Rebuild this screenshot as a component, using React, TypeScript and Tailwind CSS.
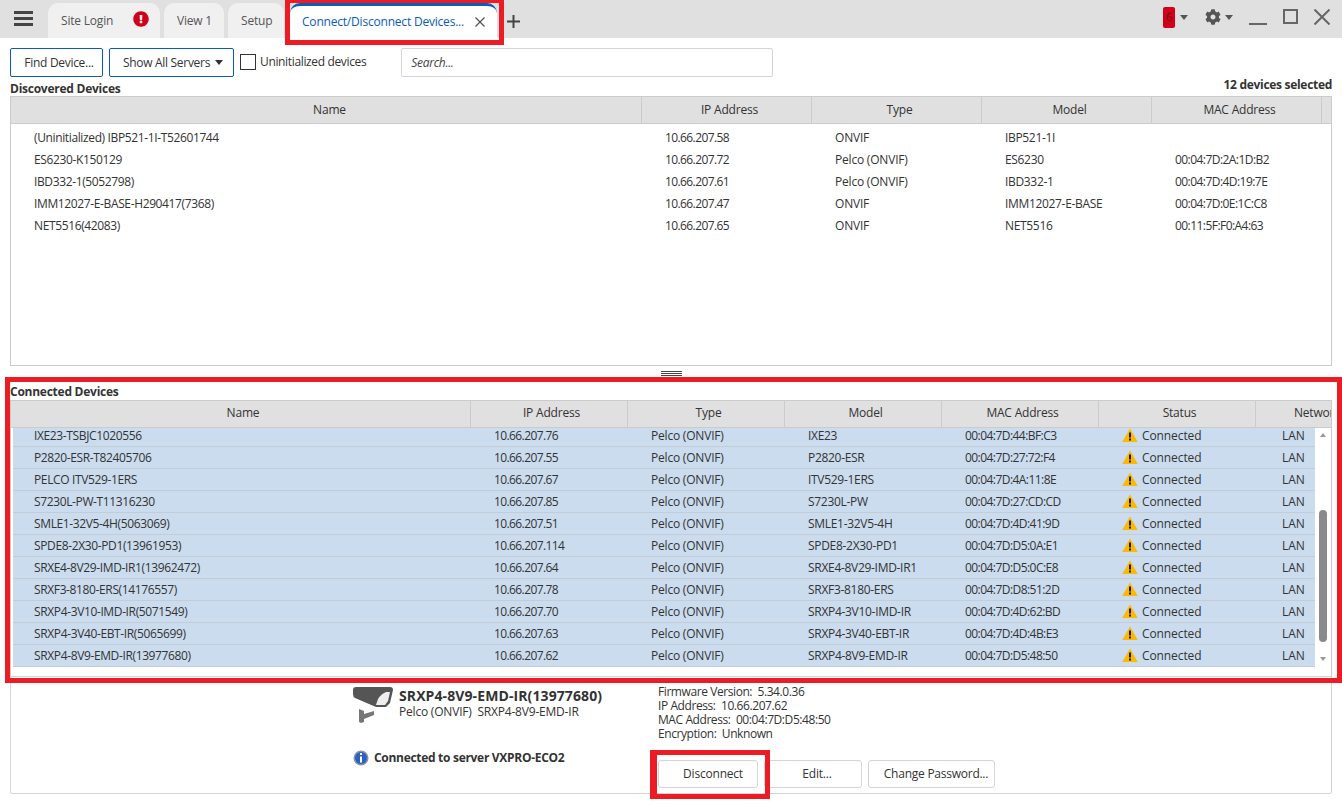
import React from "react";
import { FaCog, FaExclamationCircle } from "react-icons/fa";

const discovered = [
  ["(Uninitialized) IBP521-1I-T52601744", "10.66.207.58", "ONVIF", "IBP521-1I", ""],
  ["ES6230-K150129", "10.66.207.72", "Pelco (ONVIF)", "ES6230", "00:04:7D:2A:1D:B2"],
  ["IBD332-1(5052798)", "10.66.207.61", "Pelco (ONVIF)", "IBD332-1", "00:04:7D:4D:19:7E"],
  ["IMM12027-E-BASE-H290417(7368)", "10.66.207.47", "ONVIF", "IMM12027-E-BASE", "00:04:7D:0E:1C:C8"],
  ["NET5516(42083)", "10.66.207.65", "ONVIF", "NET5516", "00:11:5F:F0:A4:63"],
];

const connected = [
  ["IXE23-TSBJC1020556", "10.66.207.76", "IXE23", "00:04:7D:44:BF:C3"],
  ["P2820-ESR-T82405706", "10.66.207.55", "P2820-ESR", "00:04:7D:27:72:F4"],
  ["PELCO ITV529-1ERS", "10.66.207.67", "ITV529-1ERS", "00:04:7D:4A:11:8E"],
  ["S7230L-PW-T11316230", "10.66.207.85", "S7230L-PW", "00:04:7D:27:CD:CD"],
  ["SMLE1-32V5-4H(5063069)", "10.66.207.51", "SMLE1-32V5-4H", "00:04:7D:4D:41:9D"],
  ["SPDE8-2X30-PD1(13961953)", "10.66.207.114", "SPDE8-2X30-PD1", "00:04:7D:D5:0A:E1"],
  ["SRXE4-8V29-IMD-IR1(13962472)", "10.66.207.64", "SRXE4-8V29-IMD-IR1", "00:04:7D:D5:0C:E8"],
  ["SRXF3-8180-ERS(14176557)", "10.66.207.78", "SRXF3-8180-ERS", "00:04:7D:D8:51:2D"],
  ["SRXP4-3V10-IMD-IR(5071549)", "10.66.207.70", "SRXP4-3V10-IMD-IR", "00:04:7D:4D:62:BD"],
  ["SRXP4-3V40-EBT-IR(5065699)", "10.66.207.63", "SRXP4-3V40-EBT-IR", "00:04:7D:4D:4B:E3"],
  ["SRXP4-8V9-EMD-IR(13977680)", "10.66.207.62", "SRXP4-8V9-EMD-IR", "00:04:7D:D5:48:50"],
];

const WarnIcon = () => (
  <svg width="16" height="14" viewBox="0 0 16 14" className="shrink-0 -mt-[1px]">
    <path d="M8 0.5 L15.8 14 H0.2 Z" fill="#fdb900" />
    <rect x="7" y="4.5" width="2" height="5" fill="#1a1a1a" />
    <rect x="7" y="10.5" width="2" height="2" fill="#1a1a1a" />
  </svg>
);

const CameraIcon = () => (
  <svg width="40" height="36" viewBox="0 0 40 36" className="shrink-0">
    <path d="M0 3 Q0 0 3 0 H37 Q40 0 40 3 L37 16 L33 20 L23 20 L2 11 Q0 10 0 7 Z" fill="#555" />
    <path d="M23 18 Q25 8 33 5 L37 5 L35 14 L32 18 Z" fill="#eee" />
    <path d="M6 22 L11 24 L11 27 L21 24 L21 28 L11 32 L11 35 L8 36 L6 35 Z" fill="#777" />
  </svg>
);

const InfoIcon = () => (
  <svg width="16" height="16" viewBox="0 0 16 16" className="shrink-0">
    <circle cx="8" cy="8" r="7.5" fill="#8a94a6" />
    <circle cx="8" cy="8" r="6" fill="#2a62c4" />
    <rect x="7" y="3" width="2" height="2" fill="#fff" />
    <rect x="7" y="6.5" width="2" height="6" fill="#fff" />
  </svg>
);

const Header = ({ label, w, pad }: { label: string; w: string; pad: string }) => (
  <div className={`${w} ${pad} shrink-0 h-full flex items-center justify-center border-r border-[#cbcbcb] overflow-hidden`}>
    {label}
  </div>
);

export default function App() {
  return (
    <div className="relative w-[1342px] h-[801px] overflow-hidden bg-white text-[12px] text-[#333] font-['Open_Sans','Noto_Sans',sans-serif] tracking-[-0.2px]">
      {/* Tab bar */}
      <div className="h-[38px] bg-[#e0e0e0] flex items-end pl-[14px]">
        <div className="w-[19px] h-[15px] mb-[12px] flex flex-col justify-between">
          <div className="h-[3px] bg-[#444]" />
          <div className="h-[3px] bg-[#444]" />
          <div className="h-[3px] bg-[#444]" />
        </div>
        <div className="ml-[15px] w-[112px] h-[35px] bg-[#f0f0f0] rounded-t-[10px] flex items-center pl-[13px] text-[#555]">
          <span>Site Login</span>
          <FaExclamationCircle className="ml-[20px] text-[16px] text-[#d0021b] -mt-[3px]" />
        </div>
        <div className="ml-[4px] w-[60px] h-[35px] bg-[#f0f0f0] rounded-t-[10px] flex items-center pl-[13px] text-[#555]">View 1</div>
        <div className="ml-[4px] w-[56px] h-[35px] bg-[#f0f0f0] rounded-t-[10px] flex items-center pl-[13px] text-[#555]">Setup</div>
        <div className="ml-[6px] w-[207px] h-[35px] bg-white rounded-t-[10px] border-t-[3px] border-[#0a5cb8] flex items-center pl-[12px] text-[#0a5cb8]">
          <span className="whitespace-nowrap">Connect/Disconnect Devices...</span>
          <svg width="10" height="10" viewBox="0 0 10 10" className="ml-[11px]">
            <path d="M0.5 0.5 L9.5 9.5 M9.5 0.5 L0.5 9.5" stroke="#555" strokeWidth="1.3" />
          </svg>
        </div>
        <svg width="13" height="13" viewBox="0 0 13 13" className="ml-[10px] mb-[10px]">
          <path d="M6.5 0 V13 M0 6.5 H13" stroke="#444" strokeWidth="2" />
        </svg>
        <div className="ml-auto flex items-center h-[38px] pr-[12px]">
          <div className="w-[12px] h-[21px] bg-[#d0021b] rounded-[2px] text-[#7a0010] text-[11px] flex items-center justify-center -mt-[3px]">6</div>
          <div className="ml-[5px] w-0 h-0 border-l-[4px] border-r-[4px] border-t-[5px] border-l-transparent border-r-transparent border-t-[#555] -mt-[4px]" />
          <FaCog className="ml-[17px] text-[16px] text-[#555] -mt-[4px]" />
          <div className="ml-[4px] w-0 h-0 border-l-[4px] border-r-[4px] border-t-[5px] border-l-transparent border-r-transparent border-t-[#555] -mt-[4px]" />
          <div className="ml-[16px] w-[18px] h-[2px] bg-[#666] mt-[10px]" />
          <div className="ml-[16px] w-[15px] h-[15px] border-2 border-[#666] -mt-[5px]" />
          <svg width="16" height="16" viewBox="0 0 16 16" className="ml-[16px] -mt-[5px]">
            <path d="M0.5 0.5 L15.5 15.5 M15.5 0.5 L0.5 15.5" stroke="#666" strokeWidth="2" />
          </svg>
        </div>
      </div>

      <div className="px-[10px]">
        {/* Toolbar */}
        <div className="flex items-center mt-[10px] h-[29px] tracking-[-0.3px]">
          <button className="w-[93px] h-[29px] pl-[5px] border border-[#0a5cb8] rounded-[2px] text-[#333]">Find Device...</button>
          <button className="ml-[6px] w-[125px] h-[29px] pl-[3px] border border-[#0a5cb8] rounded-[2px] flex items-center justify-center text-[#333]">
            Show All Servers
            <span className="ml-[5px] w-0 h-0 border-l-[4px] border-r-[4px] border-t-[5px] border-l-transparent border-r-transparent border-t-[#333]" />
          </button>
          <div className="ml-[6px] w-[16px] h-[16px] border border-[#333] -mt-[1px]" />
          <span className="ml-[4px] -mt-[2px] tracking-[-0.35px]">Uninitialized devices</span>
          <div className="ml-[35px] w-[372px] h-[29px] border border-[#d4d4d4] rounded-[2px] flex items-center pl-[9px] italic text-[#444]">Search...</div>
        </div>

        {/* Discovered */}
        <div className="flex justify-between h-[19px] items-end">
          <span className="font-bold leading-[15px] tracking-[-0.25px]">Discovered Devices</span>
          <span className="font-bold leading-[15px] mb-[4px] tracking-[-0.3px]">12 devices selected</span>
        </div>
        <div className="h-[270px] border border-[#cbcbcb]">
          <div className="h-[27px] bg-[#e0e0e0] border-b border-[#cbcbcb] flex">
            <Header label="Name" w="w-[631px]" pad="pl-[7px]" />
            <Header label="IP Address" w="w-[170px]" pad="pl-[6px]" />
            <Header label="Type" w="w-[170px]" pad="pl-[6px]" />
            <Header label="Model" w="w-[170px]" pad="pl-[6px]" />
            <Header label="MAC Address" w="w-[170px]" pad="pl-[6px]" />
          </div>
          <div className="pt-[3px]">
            {discovered.map((r) => (
              <div key={r[0]} className="h-[22px] flex items-center whitespace-nowrap">
                <div className="w-[630px] pl-[23px] tracking-[-0.37px]">{r[0]}</div>
                <div className="w-[170px] pl-[24px] tracking-[-0.6px]">{r[1]}</div>
                <div className="w-[170px] pl-[24px]">{r[2]}</div>
                <div className="w-[170px] pl-[24px] tracking-[-0.33px]">{r[3]}</div>
                <div className="w-[170px] pl-[24px] tracking-[-0.55px]">{r[4]}</div>
              </div>
            ))}
          </div>
        </div>

        {/* Splitter */}
        <div className="h-[17px] flex flex-col items-center justify-center gap-[1px] pb-[2px]">
          <div className="w-[21px] h-[1px] bg-[#444]" />
          <div className="w-[21px] h-[1px] bg-[#444]" />
          <div className="w-[21px] h-[1px] bg-[#444]" />
        </div>

        {/* Connected */}
        <div className="h-[17px] font-bold leading-[17px] tracking-[-0.25px]">Connected Devices</div>
        <div className="h-[277px] border border-[#cbcbcb] overflow-hidden">
          <div className="h-[27px] bg-[#e0e0e0] border-b border-[#cbcbcb] flex">
            <Header label="Name" w="w-[460px]" pad="pl-[5px] pb-[2px]" />
            <Header label="IP Address" w="w-[157px]" pad="pl-[5px] pb-[2px]" />
            <Header label="Type" w="w-[157px]" pad="pl-[5px] pb-[2px]" />
            <Header label="Model" w="w-[157px]" pad="pl-[5px] pb-[2px]" />
            <Header label="MAC Address" w="w-[157px]" pad="pl-[5px] pb-[2px]" />
            <Header label="Status" w="w-[157px]" pad="pl-[5px] pb-[2px]" />
            <div className="flex-1 h-full flex items-center pl-[38px] pb-[2px] overflow-hidden whitespace-nowrap">Network</div>
          </div>
          <div className="flex h-[248px]">
            <div className="w-[1304px] pl-[2px]">
              {connected.map((r, i) => (
                <div
                  key={r[0]}
                  className={`${i === 0 ? "h-[19px] pb-[3px]" : "h-[22px]"} bg-[#cbdcee] border-b border-[#c4cdd6] flex items-center whitespace-nowrap`}
                >
                  <div className="w-[457px] pl-[21px] shrink-0 tracking-[-0.37px]">{r[0]}</div>
                  <div className="w-[157px] pl-[24px] shrink-0 tracking-[-0.6px]">{r[1]}</div>
                  <div className="w-[157px] pl-[24px] shrink-0">Pelco (ONVIF)</div>
                  <div className="w-[157px] pl-[24px] shrink-0 tracking-[-0.3px]">{r[2]}</div>
                  <div className="w-[157px] pl-[24px] shrink-0 tracking-[-0.55px]">{r[3]}</div>
                  <div className="w-[157px] pl-[24px] shrink-0 flex items-center gap-[4px] tracking-[-0.1px]">
                    <WarnIcon />
                    Connected
                  </div>
                  <div className="pl-[27px] tracking-[-0.1px]">LAN</div>
                </div>
              ))}
            </div>
            {/* Scrollbar */}
            <div className="relative flex-1 h-[238px]">
              <div className="absolute top-[5px] left-[5px] w-0 h-0 border-l-[3px] border-r-[3px] border-b-[4px] border-l-transparent border-r-transparent border-b-[#999]" />
              <div className="absolute top-[82px] left-[4px] w-[8px] h-[132px] rounded-[4px] bg-[#8a8a8a]" />
              <div className="absolute top-[229px] left-[5px] w-0 h-0 border-l-[3px] border-r-[3px] border-t-[4px] border-l-transparent border-r-transparent border-t-[#999]" />
            </div>
          </div>
        </div>

        {/* Details */}
        <div className="h-[118px] -mt-[1px] border border-[#d4d4d4] rounded-[2px] flex pl-[342px]">
          <div className="w-[305px]">
            <div className="flex mt-[10px] gap-[6px]">
              <CameraIcon />
              <div>
                <div className="font-bold text-[14px] leading-[18px] tracking-[0.1px] whitespace-nowrap">SRXP4-8V9-EMD-IR(13977680)</div>
                <div className="leading-[15px] -mt-[1px] whitespace-nowrap">Pelco (ONVIF)&nbsp; SRXP4-8V9-EMD-IR</div>
              </div>
            </div>
            <div className="flex items-center gap-[5px] mt-[26px] font-bold tracking-[-0.3px]">
              <InfoIcon />
              Connected to server VXPRO-ECO2
            </div>
          </div>
          <div>
            <div className="mt-[8px] leading-[14px] whitespace-nowrap tracking-[-0.42px]">
              <div>Firmware Version:&nbsp; 5.34.0.36</div>
              <div>IP Address:&nbsp; 10.66.207.62</div>
              <div>MAC Address:&nbsp; 00:04:7D:D5:48:50</div>
              <div>Encryption:&nbsp; Unknown</div>
            </div>
            <div className="flex gap-[6px] mt-[19px]">
              <button className="w-[100px] h-[28px] pl-[10px] border border-[#d4d4d4] rounded-[3px]">Disconnect</button>
              <button className="w-[98px] h-[28px] pl-[8px] border border-[#d4d4d4] rounded-[3px]">Edit...</button>
              <button className="w-[127px] h-[28px] pl-[9px] border border-[#d4d4d4] rounded-[3px] tracking-[-0.25px] whitespace-nowrap">Change Password...</button>
            </div>
          </div>
        </div>
      </div>

      {/* Red annotation boxes */}
      <div className="absolute left-[285px] top-0 w-[219px] h-[45px] border-[5px] border-t-[3px] border-[#ed1c24] pointer-events-none" />
      <div className="absolute left-[5px] top-[377px] w-[1337px] h-[306px] border-[5px] border-[#ed1c24] pointer-events-none" />
      <div className="absolute left-[650px] top-[750px] w-[120px] h-[49px] border-[5px] border-l-[7px] border-[#ed1c24] pointer-events-none" />
    </div>
  );
}
